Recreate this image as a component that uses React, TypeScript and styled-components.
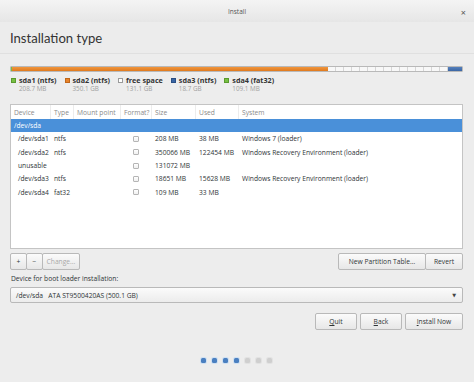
import React from "react";
import styled, { createGlobalStyle } from "styled-components";

const Global = createGlobalStyle`
  html, body { margin: 0; padding: 0; background: #ededed; }
  body { font-family: "Open Sans", "DejaVu Sans", sans-serif; }
  * { box-sizing: border-box; }
`;

const Window = styled.div`
  width: 474px;
  height: 382px;
  background: #ededed;
  display: flex;
  flex-direction: column;
  overflow: hidden;
  color: #2e3436;
  font-size: 6.7px;
`;

const TitleBar = styled.div`
  height: 22px;
  flex: none;
  display: flex;
  align-items: center;
  justify-content: center;
  position: relative;
  background: linear-gradient(#f4f4f4, #e6e6e6);
  font-size: 6.5px;
  color: #555;
`;

const Close = styled.span`
  position: absolute;
  right: 8px;
  top: 6px;
  font-size: 9px;
  color: #555;
`;

const Header = styled.div`
  height: 32px;
  flex: none;
  display: flex;
  align-items: center;
  padding: 0 10px;
  background: #ececec;
  border-bottom: 1px solid #e0e0e0;
  font-size: 13.1px;
  color: #333;
  font-family: Lato, "Open Sans", sans-serif;
`;

const Body = styled.div`
  flex: 1;
  display: flex;
  flex-direction: column;
  padding: 12px 11px 0 10px;
`;

const Bar = styled.div`
  display: flex;
  height: 6px;
  border: 1px solid #b9b9b9;
  border-radius: 1px;
  overflow: hidden;
`;

const Seg = styled.div<{ $c: string; $w: string }>`
  width: ${(p) => p.$w};
  flex: ${(p) => (p.$w === "auto" ? "1" : "none")};
  background: ${(p) => p.$c};
`;

const Free = styled.div<{ $w: string }>`
  width: ${(p) => p.$w};
  background-color: #f8f8f8;
  background-image: repeating-linear-gradient(90deg, transparent 0 7px, #d6d6d6 7px 8px);
`;

const Legend = styled.div`
  display: flex;
  gap: 8px;
  margin-top: 3px;
  padding-left: 1px;
`;

const LegendItem = styled.div`
  display: grid;
  grid-template-columns: 5px auto;
  column-gap: 3px;
  align-items: center;
`;

const Swatch = styled.div<{ $c: string; $b: string }>`
  width: 5px;
  height: 5px;
  background: ${(p) => p.$c};
  border: 1px solid ${(p) => p.$b};
`;

const LegName = styled.div`
  font-weight: 700;
  font-size: 7.2px;
  color: #333;
  line-height: 10px;
`;

const LegSize = styled.div`
  grid-column: 2;
  font-size: 6.3px;
  color: #a0a0a0;
  line-height: 8px;
`;

const TableBox = styled.div`
  margin-top: 11px;
  height: 145px;
  background: #fff;
  border: 1px solid #c4c4c4;
  display: flex;
  flex-direction: column;
`;

const cols = "40px 23px 47px 31px 44px 43px 1fr";

const HeadRow = styled.div`
  display: grid;
  grid-template-columns: ${cols};
  height: 14px;
  align-items: center;
  color: #8a8a8a;
`;

const HeadCell = styled.div<{ $last?: boolean }>`
  padding-left: 3px;
  height: 100%;
  display: flex;
  align-items: center;
  border-right: ${(p) => (p.$last ? "none" : "1px solid #ececec")};
  white-space: nowrap;
  overflow: hidden;
`;

const Row = styled.div<{ $sel?: boolean }>`
  display: grid;
  grid-template-columns: ${cols};
  height: 13.3px;
  align-items: center;
  background: ${(p) => (p.$sel ? "#4a90d9" : "transparent")};
  color: ${(p) => (p.$sel ? "#fff" : "#2e3436")};
`;

const Cell = styled.div<{ $indent?: number }>`
  padding-left: ${(p) => p.$indent ?? 4}px;
  white-space: nowrap;
`;

const CheckCell = styled.div`
  display: flex;
  padding-left: 12px;
`;

const Check = styled.div`
  width: 6px;
  height: 6px;
  border: 1px solid #b5b5b5;
  border-radius: 1px;
  background: linear-gradient(#fff, #f0f0f0);
`;

const Toolbar = styled.div`
  display: flex;
  justify-content: space-between;
  margin-top: 4px;
  height: 17px;
`;

const Group = styled.div`
  display: flex;
`;

const Btn = styled.div<{ $w: number; $dis?: boolean; $joined?: boolean }>`
  width: ${(p) => p.$w}px;
  height: 100%;
  display: flex;
  align-items: center;
  justify-content: center;
  border: 1px solid #b9b9b9;
  margin-left: ${(p) => (p.$joined ? "-1px" : "0")};
  border-radius: 2px;
  background: linear-gradient(#fbfbfb, #e7e7e7);
  color: ${(p) => (p.$dis ? "#a8a8a8" : "#2e3436")};
  font-size: 6.7px;
`;

const Label = styled.div`
  margin-top: 3px;
  margin-left: 1px;
  line-height: 11px;
`;

const Combo = styled.div`
  margin-top: 3px;
  height: 16px;
  display: flex;
  align-items: center;
  justify-content: space-between;
  border: 1px solid #b9b9b9;
  border-radius: 2px;
  background: linear-gradient(#fbfbfb, #ececec);
  padding: 0 6px 0 5px;
`;

const ComboText = styled.span`
  white-space: pre;
`;

const Arrow = styled.span`
  font-size: 5px;
  color: #444;
`;

const Actions = styled.div`
  display: flex;
  justify-content: flex-end;
  gap: 3px;
  margin-top: 10px;
  height: 17px;
`;

const U = styled.span`
  text-decoration: underline;
`;

const Dots = styled.div`
  display: flex;
  justify-content: center;
  gap: 6px;
  margin-top: 28px;
`;

const Dot = styled.div<{ $on: boolean }>`
  width: 5px;
  height: 5px;
  border-radius: 1.5px;
  background: ${(p) => (p.$on ? "#4a7fc0" : "#cfcfcf")};
  box-shadow: 0 0 0 1px ${(p) => (p.$on ? "#cfe0f2" : "#e2e2e2")};
`;

const legend = [
  { name: "sda1 (ntfs)", size: "208.7 MB", c: "#77c043", b: "#5a9a2e" },
  { name: "sda2 (ntfs)", size: "350.1 GB", c: "#e8832a", b: "#c0671a" },
  { name: "free space", size: "131.1 GB", c: "#ffffff", b: "#9a9a9a" },
  { name: "sda3 (ntfs)", size: "18.7 GB", c: "#3b66a4", b: "#2a4f85" },
  { name: "sda4 (fat32)", size: "109.1 MB", c: "#77c043", b: "#5a9a2e" },
];

const rows = [
  { dev: "/dev/sda1", type: "ntfs", size: "208 MB", used: "38 MB", sys: "Windows 7 (loader)" },
  { dev: "/dev/sda2", type: "ntfs", size: "350066 MB", used: "122454 MB", sys: "Windows Recovery Environment (loader)" },
  { dev: "unusable", type: "", size: "131072 MB", used: "", sys: "" },
  { dev: "/dev/sda3", type: "ntfs", size: "18651 MB", used: "15628 MB", sys: "Windows Recovery Environment (loader)" },
  { dev: "/dev/sda4", type: "fat32", size: "109 MB", used: "33 MB", sys: "" },
];

export default function App() {
  return (
    <>
      <Global />
      <Window>
        <TitleBar>
          Install
          <Close>×</Close>
        </TitleBar>
        <Header>Installation type</Header>
        <Body>
          <Bar>
            <Seg $c="#77c043" $w="1px" />
            <Seg $c="linear-gradient(#f0963e, #e07a1e)" $w="316px" />
            <Free $w="120px" />
            <Seg $c="linear-gradient(#5580bd, #3b66a4)" $w="auto" />
          </Bar>
          <Legend>
            {legend.map((l) => (
              <LegendItem key={l.name}>
                <Swatch $c={l.c} $b={l.b} />
                <LegName>{l.name}</LegName>
                <LegSize>{l.size}</LegSize>
              </LegendItem>
            ))}
          </Legend>
          <TableBox>
            <HeadRow>
              <HeadCell>Device</HeadCell>
              <HeadCell>Type</HeadCell>
              <HeadCell>Mount point</HeadCell>
              <HeadCell>Format?</HeadCell>
              <HeadCell>Size</HeadCell>
              <HeadCell>Used</HeadCell>
              <HeadCell $last>System</HeadCell>
            </HeadRow>
            <Row $sel>
              <Cell $indent={3}>/dev/sda</Cell>
            </Row>
            {rows.map((r) => (
              <Row key={r.dev}>
                <Cell $indent={7}>{r.dev}</Cell>
                <Cell $indent={3}>{r.type}</Cell>
                <Cell />
                <CheckCell>
                  <Check />
                </CheckCell>
                <Cell $indent={3}>{r.size}</Cell>
                <Cell $indent={3}>{r.used}</Cell>
                <Cell $indent={3}>{r.sys}</Cell>
              </Row>
            ))}
          </TableBox>
          <Toolbar>
            <Group>
              <Btn $w={17}>+</Btn>
              <Btn $w={17} $joined>−</Btn>
              <Btn $w={38} $joined $dis>Change...</Btn>
            </Group>
            <Group>
              <Btn $w={88}>New Partition Table...</Btn>
              <Btn $w={38} $joined>Revert</Btn>
            </Group>
          </Toolbar>
          <Label>Device for boot loader installation:</Label>
          <Combo>
            <ComboText>/dev/sda   ATA ST9500420AS (500.1 GB)</ComboText>
            <Arrow>▼</Arrow>
          </Combo>
          <Actions>
            <Btn $w={42}>
              <U>Q</U>uit
            </Btn>
            <Btn $w={42}>
              <U>B</U>ack
            </Btn>
            <Btn $w={58}>
              <U>I</U>nstall Now
            </Btn>
          </Actions>
          <Dots>
            {[1, 1, 1, 1, 0, 0, 0].map((v, i) => (
              <Dot key={i} $on={!!v} />
            ))}
          </Dots>
        </Body>
      </Window>
    </>
  );
}
